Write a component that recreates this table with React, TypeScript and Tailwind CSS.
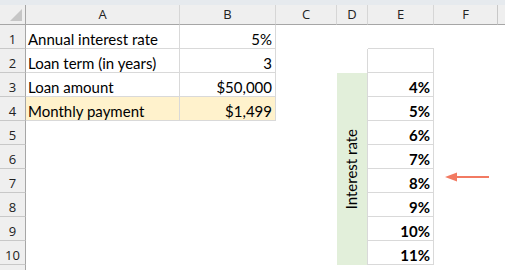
import React from "react";

const cellFont = { fontFamily: "Lato, 'Open Sans', sans-serif" };
const hdrFont = { fontFamily: "'Open Sans', 'Noto Sans', sans-serif" };

const cols = ["A", "B", "C", "D", "E", "F"];

function ColHeader({ label, last }: { label: string; last?: boolean }) {
  return (
    <div
      className={`bg-[#efefef] border-b border-b-[#a6a6a6] ${last ? "border-r border-r-[#c8c8c8]" : "border-r border-r-[#d6d6d6]"} flex items-center justify-center text-[13px] text-[#222]`}
      style={hdrFont}
    >
      {label}
    </div>
  );
}

function RowHeader({ n }: { n?: number }) {
  return (
    <div
      className="bg-[#efefef] border-r border-r-[#a6a6a6] border-b border-b-[#c8c8c8] flex items-end justify-center text-[13px] leading-[18px] text-[#222]"
      style={hdrFont}
    >
      {n}
    </div>
  );
}

export default function App() {
  const aLabels = ["Annual interest rate", "Loan term (in years)", "Loan amount", "Monthly payment"];
  const bVals = ["5%", "3", "$50,000", "$1,499"];
  const eVals = ["", "", "4%", "5%", "6%", "7%", "8%", "9%", "10%", "11%"];

  const rows = [];
  for (let r = 1; r <= 10; r++) {
    const i = r - 1;
    rows.push(<RowHeader key={`rh${r}`} n={r} />);
    if (r <= 4) {
      rows.push(
        <div
          key={`a${r}`}
          className={`border-r border-b border-[#d9d9d9] flex items-end pl-[2px] text-[15px] leading-[18px] text-black ${r === 4 ? "bg-[#fff2cc]" : "bg-white"}`}
          style={cellFont}
        >
          {aLabels[i]}
        </div>
      );
      rows.push(
        <div
          key={`b${r}`}
          className={`border-r border-b border-[#d9d9d9] flex items-end justify-end pr-[3px] text-[15px] leading-[18px] text-black ${r === 4 ? "bg-[#fff2cc]" : "bg-white"}`}
          style={cellFont}
        >
          {bVals[i]}
        </div>
      );
    } else {
      rows.push(<div key={`a${r}`} className="bg-white" />);
      rows.push(<div key={`b${r}`} className="bg-white" />);
    }
    rows.push(<div key={`c${r}`} className="bg-white" />);
    if (r === 1) {
      rows.push(<div key={`d${r}`} className="bg-white" />);
    } else if (r === 2) {
      rows.push(<div key={`d${r}`} className="bg-white border-r border-r-[#d9d9d9]" />);
    } else if (r === 3) {
      rows.push(
        <div
          key={`d${r}`}
          className="row-span-8 bg-[#e2efda] border-r border-r-[#d9d9d9] flex items-center justify-center"
        >
          <span
            className="[writing-mode:vertical-rl] rotate-180 text-[15px] text-black pl-[2px]"
            style={cellFont}
          >
            Interest rate
          </span>
        </div>
      );
    }
    if (r === 1) {
      rows.push(<div key={`e${r}`} className="bg-white border-b border-b-[#d9d9d9]" />);
    } else {
      rows.push(
        <div
          key={`e${r}`}
          className="bg-white border-r border-b border-[#d9d9d9] flex items-end justify-end pr-[3px] text-[15px] leading-[18px] font-bold text-black"
          style={cellFont}
        >
          {eVals[i]}
        </div>
      );
    }
    if (r === 7) {
      rows.push(
        <div key={`f${r}`} className="bg-white flex items-start pl-[11px] pt-[3px]">
          <svg width="46" height="12" viewBox="0 0 46 12">
            <line x1="8" y1="5" x2="44" y2="5" stroke="#f27a62" strokeWidth="2" />
            <polygon points="0,5 12,0.5 12,9.5" fill="#f27a62" />
          </svg>
        </div>
      );
    } else {
      rows.push(<div key={`f${r}`} className="bg-white" />);
    }
    rows.push(<div key={`g${r}`} className="bg-white" />);
  }

  return (
    <div className="w-[505px] h-[270px] overflow-hidden bg-white">
      <div className="grid grid-cols-[26px_154px_96px_61px_31px_66px_64px_1fr] grid-rows-[5px_20px_repeat(11,24px)]">
        <div className="col-span-8 bg-[#e6eaee]" />
        <div className="bg-[#efefef] border-r border-r-[#a6a6a6] border-b border-b-[#a6a6a6] relative">
          <svg className="absolute right-[3px] bottom-[3px]" width="12" height="12" viewBox="0 0 12 12">
            <polygon points="12,0 12,12 0,12" fill="#c6c6c6" />
          </svg>
        </div>
        {cols.map((c, i) => (
          <ColHeader key={c} label={c} last={i === cols.length - 1} />
        ))}
        <div className="bg-[#efefef] border-b border-b-[#a6a6a6]" />
        {rows}
        <RowHeader />
      </div>
    </div>
  );
}
